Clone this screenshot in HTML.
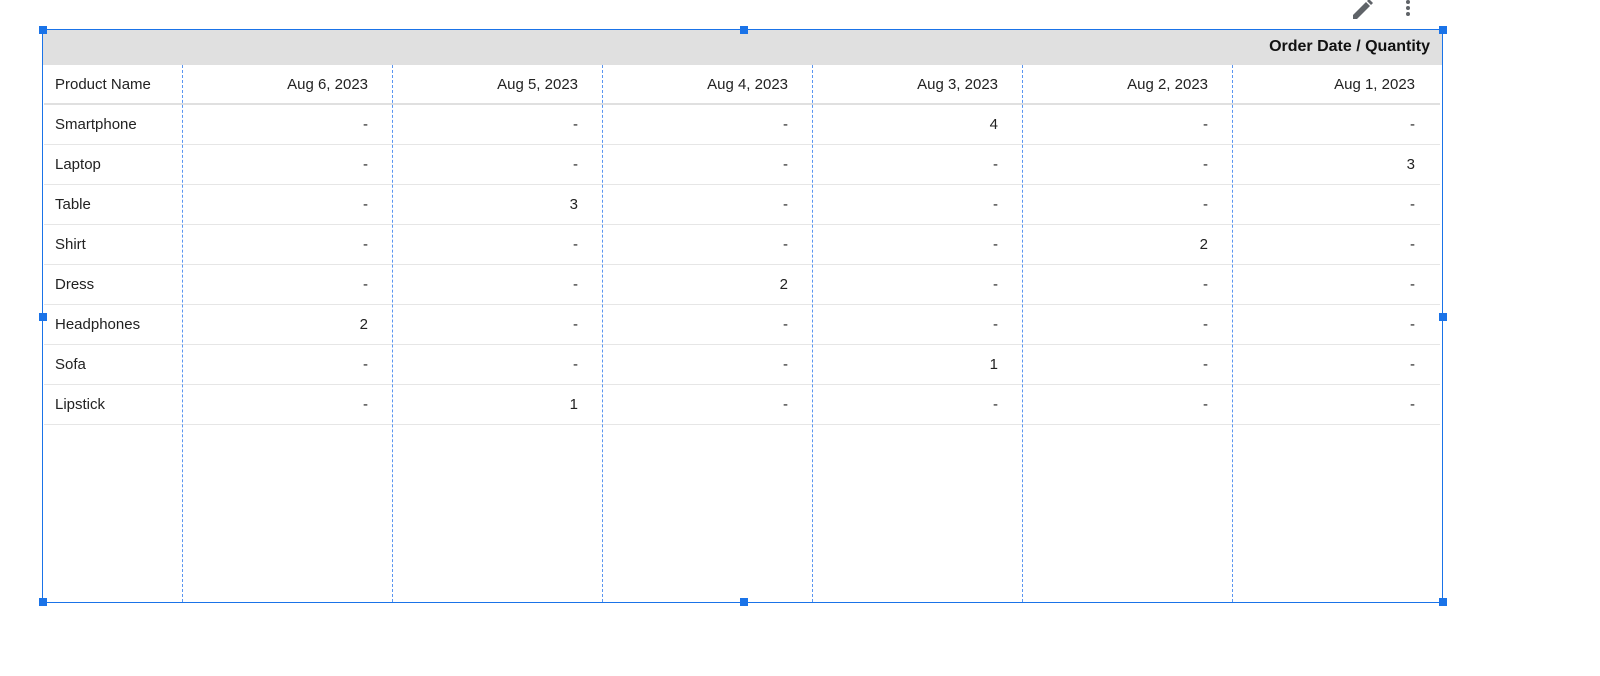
<!DOCTYPE html>
<html><head><style>
body{margin:0;width:1600px;height:676px;background:#fff;position:relative;overflow:hidden;font-family:"Liberation Sans",Arial,sans-serif;}
.hdr{position:absolute;left:43px;top:30px;width:1399px;height:35px;background:#e0e0e0;}
.hdr span{position:absolute;right:12px;top:8px;font-weight:bold;font-size:16px;color:#111;}
table{position:absolute;left:44px;top:65px;border-collapse:collapse;table-layout:fixed;font-size:15px;color:#222;}
td{height:39px;border-bottom:1px solid #e6e6e6;padding:0;text-align:right;padding-right:25px;white-space:nowrap;}
td:first-child{text-align:left;padding-left:11px;padding-right:0;}
tr:first-child td{border-bottom:2px solid #e0e0e0;height:38px;}
.dv{position:absolute;top:65px;height:537px;width:0;border-left:1.5px dashed #5a95f0;}
.box{position:absolute;left:42px;top:29px;width:1399px;height:572px;border:1.5px solid #1a73e8;}
.h{position:absolute;width:8px;height:8px;background:#1a73e8;}
</style></head><body>
<div class="hdr"><span>Order Date / Quantity</span></div>
<table>
<colgroup><col style="width:139px"><col style="width:210px"><col style="width:210px"><col style="width:210px"><col style="width:210px"><col style="width:210px"><col style="width:207px"></colgroup>
<tr><td>Product Name</td><td>Aug 6, 2023</td><td>Aug 5, 2023</td><td>Aug 4, 2023</td><td>Aug 3, 2023</td><td>Aug 2, 2023</td><td>Aug 1, 2023</td></tr>
<tr><td>Smartphone</td><td>-</td><td>-</td><td>-</td><td>4</td><td>-</td><td>-</td></tr>
<tr><td>Laptop</td><td>-</td><td>-</td><td>-</td><td>-</td><td>-</td><td>3</td></tr>
<tr><td>Table</td><td>-</td><td>3</td><td>-</td><td>-</td><td>-</td><td>-</td></tr>
<tr><td>Shirt</td><td>-</td><td>-</td><td>-</td><td>-</td><td>2</td><td>-</td></tr>
<tr><td>Dress</td><td>-</td><td>-</td><td>2</td><td>-</td><td>-</td><td>-</td></tr>
<tr><td>Headphones</td><td>2</td><td>-</td><td>-</td><td>-</td><td>-</td><td>-</td></tr>
<tr><td>Sofa</td><td>-</td><td>-</td><td>-</td><td>1</td><td>-</td><td>-</td></tr>
<tr><td>Lipstick</td><td>-</td><td>1</td><td>-</td><td>-</td><td>-</td><td>-</td></tr>
</table>
<div class="dv" style="left:182px"></div><div class="dv" style="left:392px"></div><div class="dv" style="left:602px"></div><div class="dv" style="left:812px"></div><div class="dv" style="left:1022px"></div><div class="dv" style="left:1232px"></div>
<div class="box"></div>
<div class="h" style="left:39px;top:26px"></div><div class="h" style="left:740px;top:26px"></div><div class="h" style="left:1439px;top:26px"></div>
<div class="h" style="left:39px;top:313px"></div><div class="h" style="left:1439px;top:313px"></div>
<div class="h" style="left:39px;top:598px"></div><div class="h" style="left:740px;top:598px"></div><div class="h" style="left:1439px;top:598px"></div>
<svg style="position:absolute;left:1350px;top:0" width="26" height="20" viewBox="0 0 26 20"><path d="M3 15 L3 19 L7 19 L20 6 L16 2 Z" fill="#5f6368"/><path d="M17 1 L21 5 L23 3 L19 -1Z" fill="#5f6368"/></svg>
<svg style="position:absolute;left:1402px;top:0" width="12" height="20"><circle cx="6" cy="2" r="2" fill="#5f6368"/><circle cx="6" cy="8" r="2" fill="#5f6368"/><circle cx="6" cy="14" r="2" fill="#5f6368"/></svg>
</body></html>
